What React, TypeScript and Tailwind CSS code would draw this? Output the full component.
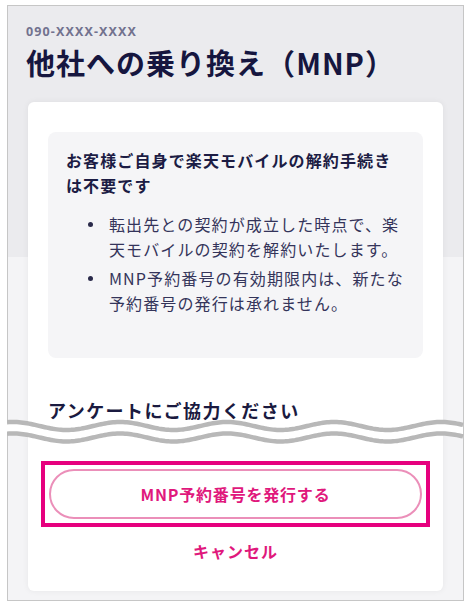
import React from "react";

const P = 107;
function wavePts(yc: number, A: number, w: number, phase: number): string[] {
  const pts: string[] = [];
  for (let x = 0; x <= w; x += 2) {
    const y = yc - A * Math.cos((2 * Math.PI * (x - phase)) / P);
    pts.push(`${x},${y.toFixed(2)}`);
  }
  return pts;
}

function Wave() {
  const w = 457;
  const top = wavePts(10, 4, w, 113);
  const bottom = wavePts(21.5, 4, w, 113);
  const band = [...top, ...bottom.slice().reverse()].join(" ");
  return (
    <svg
      className="absolute left-[7px] top-[416px]"
      width={w}
      height={32}
      viewBox={`0 0 ${w} 32`}
    >
      <polygon points={band} fill="#ffffff" />
      <polyline points={top.join(" ")} fill="none" stroke="#b8b8b8" strokeWidth={4.5} />
      <polyline points={bottom.join(" ")} fill="none" stroke="#b8b8b8" strokeWidth={4.5} />
    </svg>
  );
}

function Dot() {
  return (
    <span className="w-[43px] shrink-0 flex h-[25px] items-center pl-[22px]">
      <span className="w-[5px] h-[5px] rounded-full bg-[#2a2a4a]" />
    </span>
  );
}

export default function App() {
  return (
    <div className="relative w-[468px] h-[604px] bg-white pt-[5px] pl-[7px] font-['Noto_Sans_CJK_JP','Noto_Sans',sans-serif]">
      <div className="w-[457px] h-[596px] border border-[#c6c6c6] bg-[linear-gradient(to_bottom,#ebebee_0px,#ebebee_251px,#f4f4f6_251px,#f4f4f6_100%)] flex flex-col">
        <div className="px-[18px] pt-[20px]">
          <div className="font-['Noto_Sans',sans-serif] text-[12.5px] leading-[12px] font-bold tracking-[0.09em] text-[#72728e]">
            090-XXXX-XXXX
          </div>
          <h1 className="mt-[7px] text-[29px] leading-[34px] font-bold tracking-[0.035em] text-[#16163f]">
            他社への乗り換え（MNP）
          </h1>
        </div>
        <div className="mx-[20px] mt-[23px] bg-white rounded-[6px] shadow-[0_0_6px_rgba(0,0,0,0.06)] px-[20px] pt-[30px] pb-[28px] flex flex-col">
          <div className="bg-[#f5f5f7] rounded-[8px] pl-[18px] pr-[14px] pt-[16px] pb-[42px]">
            <p className="text-[16px] leading-[25px] font-bold tracking-[0.07em] text-[#1c1c44]">
              お客様ご自身で楽天モバイルの解約手続き
              <br />
              は不要です
            </p>
            <ul className="mt-[14px] flex flex-col gap-[4px] text-[16px] leading-[25px] tracking-[0.07em] text-[#34345a]">
              <li className="flex">
                <Dot />
                <span>
                  転出先との契約が成立した時点で、楽
                  <br />
                  天モバイルの契約を解約いたします。
                </span>
              </li>
              <li className="flex">
                <Dot />
                <span>
                  MNP予約番号の有効期限内は、新たな
                  <br />
                  予約番号の発行は承れません。
                </span>
              </li>
            </ul>
          </div>
          <h2 className="mt-[38px] text-[18px] leading-[28px] font-bold tracking-[0.08em] text-[#1a1a40]">
            アンケートにご協力ください
          </h2>
          <div className="mt-[37px] -mx-[7px] border-4 border-[#e6007e] p-[4px]">
            <button className="w-full h-[50px] rounded-full border-2 border-[#eb8fb9] bg-white text-[16px] font-bold tracking-[0.05em] text-[#e0187c]">
              MNP予約番号を発行する
            </button>
          </div>
          <div className="mt-[12px] text-center text-[16px] leading-[24px] font-bold tracking-[0.06em] text-[#e0187c]">
            キャンセル
          </div>
        </div>
      </div>
      <Wave />
    </div>
  );
}
